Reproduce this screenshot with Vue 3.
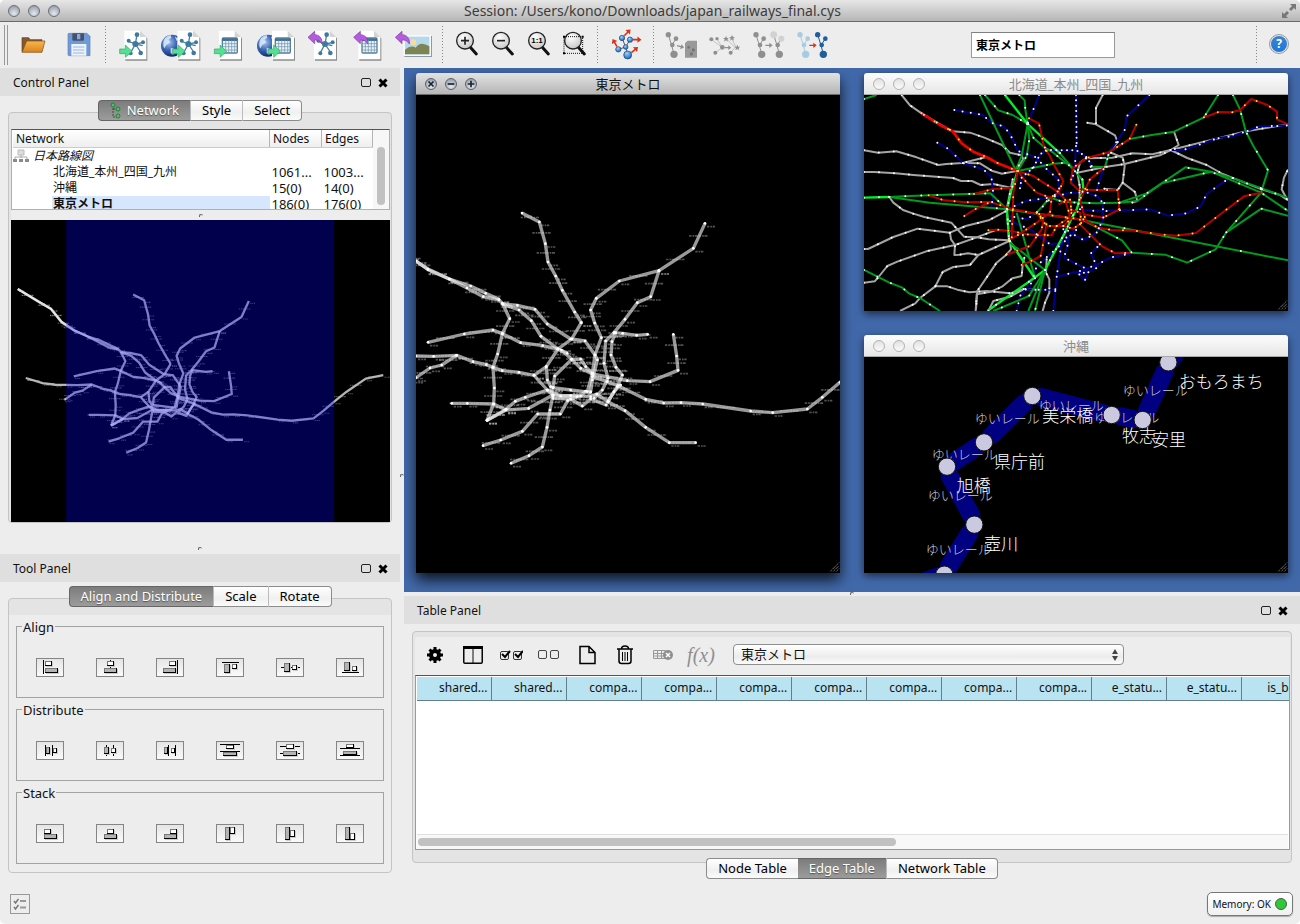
<script setup>
import { ref } from 'vue'

const search = ref('東京メトロ')
const currentNetwork = ref('東京メトロ')

const controlTabs = ['Network', 'Style', 'Select']
const toolTabs = ['Align and Distribute', 'Scale', 'Rotate']
const tableTabs = ['Node Table', 'Edge Table', 'Network Table']
const controlTab = ref('Network')
const toolTab = ref('Align and Distribute')
const tableTab = ref('Edge Table')

const networks = [
    { name: '北海道_本州_四国_九州', nodes: '1061...', edges: '1003...' },
    { name: '沖縄', nodes: '15(0)', edges: '14(0)' },
    { name: '東京メトロ', nodes: '186(0)', edges: '176(0)' }
]

const columns = [
    'shared...', 'shared...', 'compa...', 'compa...', 'compa...', 'compa...',
    'compa...', 'compa...', 'compa...', 'e_statu...', 'e_statu...', 'is_bull...'
]

// shapes: [kind, x, y, w, h], l = guide line, w = white box, g = gray box
const toolGroups = [
    {
        title: 'Align',
        tools: [
            { name: 'Align left', shapes: [['l',7,2,1,14],['w',9,3,7,5],['g',9,10,13,5]] },
            { name: 'Align center', shapes: [['l',14,2,1,14],['w',11,3,7,5],['g',8,10,13,5]] },
            { name: 'Align right', shapes: [['l',21,2,1,14],['w',13,3,7,5],['g',7,10,13,5]] },
            { name: 'Align top', shapes: [['l',6,4,17,1],['g',8,6,6,9],['w',16,6,5,5]] },
            { name: 'Align middle', shapes: [['l',5,9,19,1],['g',8,5,6,9],['w',16,7,5,5]] },
            { name: 'Align bottom', shapes: [['l',6,14,17,1],['g',8,4,6,9],['w',16,8,5,5]] }
        ]
    },
    {
        title: 'Distribute',
        tools: [
            { name: 'Distribute left', shapes: [['l',9,4,1,11],['g',10,6,4,7],['l',16,4,1,11],['w',17,7,4,5]] },
            { name: 'Distribute center', shapes: [['l',10,4,1,11],['g',8,6,5,7],['l',17,4,1,11],['w',15,7,5,5]] },
            { name: 'Distribute right', shapes: [['g',8,6,4,7],['l',12,4,1,11],['w',15,7,4,5],['l',19,4,1,11]] },
            { name: 'Distribute top', shapes: [['l',4,3,20,1],['w',10,4,8,4],['l',4,10,20,1],['g',7,11,14,4]] },
            { name: 'Distribute middle', shapes: [['l',4,5,20,1],['w',10,3,8,5],['l',4,12,20,1],['g',7,10,14,5]] },
            { name: 'Distribute bottom', shapes: [['w',10,3,8,4],['l',4,7,20,1],['g',7,10,14,4],['l',4,14,20,1]] }
        ]
    },
    {
        title: 'Stack',
        tools: [
            { name: 'Stack left', shapes: [['w',8,5,7,5],['g',8,10,13,5]] },
            { name: 'Stack center', shapes: [['w',11,5,7,5],['g',8,10,13,5]] },
            { name: 'Stack right', shapes: [['w',14,5,7,5],['g',8,10,13,5]] },
            { name: 'Stack top', shapes: [['g',9,3,5,13],['w',14,3,5,7]] },
            { name: 'Stack middle', shapes: [['g',9,3,5,13],['w',14,6,5,7]] },
            { name: 'Stack bottom', shapes: [['g',9,3,5,13],['w',14,9,5,7]] }
        ]
    }
]

// Tokyo subway, shared by the network window and the overview
const metroLines = [
    '-194,415 -96,475 -36,508 14,570 36,585 72,611 136,639 189,666 238,692 285,702 297,714 340,718 393,730 430,774 500,819',
    '-194,415 -96,473 -36,510 14,572 72,609 136,639 200,660 245,682 285,700',
    '297,714 345,732 382,764 411,811 462,849',
    '295,712 317,758 295,803 281,864 267,904 271,966 269,1014 249,1063',
    '72,829 181,804 267,792 295,803 350,830 416,839 462,849 490,862',
    '-156,837 -76,861 -16,869 36,870 89,871 158,868 207,887 247,896 267,904 295,914 345,919 390,928 430,972 447,987',
    '158,868 113,897 78,906 36,935 27,940',
    '143,1012 190,1012 269,1014 306,1032',
    '249,1063 306,1030 334,1006 364,994 430,972',
    '249,1063 306,1032 374,1027 447,987',
    '237,1139 290,1122 355,1096 401,1044 469,1044 491,1004 520,992',
    '321,1192 375,1169 415,1143 429,1084 438,1032 447,987 440,962 430,942 427,902 462,849 503,819 532,770',
    '354,441 406,468 424,533 432,588 455,630 475,673 512,738 532,770',
    '903,472 868,547 765,614 646,645 577,697 560,732 572,771 592,815 573,867 565,922 550,977',
    '765,614 740,692 700,710 663,760 630,800 605,825 600,892 612,937 595,972 570,997',
    '630,800 656,802 698,808 731,805',
    '808,805 818,870 822,913 738,947 670,944 565,924 530,907 503,880 472,852',
    '635,800 624,827 621,867 636,904 655,927 640,962 612,1007',
    '503,819 543,825 573,867 580,882 565,942 560,977',
    '447,965 500,972 560,979',
    '565,932 610,947 642,959 725,1000 779,1011 831,1010 896,1014 1040,1035 1106,1040 1210,1029 1255,994 1308,949 1367,902 1458,840 1541,823',
    '447,989 500,989 560,992 578,984 612,1007 663,1034 725,1084 796,1130 875,1130',
    '447,965 452,930 503,880 530,879 545,902 565,922',
    '447,997 500,999 535,1020 560,999 606,1017 630,977 650,957',
    '390,928 427,902',
    '430,972 470,990 530,990 545,975'
]

function toPoints(line){
    return line.split(' ').map(p=>{
        let xy = p.split(',')
        return { x: Number(xy[0]), y: Number(xy[1]) }
    })
}

const metroNodes = metroLines.flatMap(toPoints)

// captions under the stations and on the middle of the edges
const metroCaptions = []
metroLines.forEach(line=>{
    let ps = toPoints(line)
    for(let i=0;i<ps.length;i++){
        metroCaptions.push({ x: ps[i].x+6, y: ps[i].y+10, w: 24 })
        if(i>0){
            metroCaptions.push({ x: (ps[i].x+ps[i-1].x)/2-30, y: (ps[i].y+ps[i-1].y)/2, w: 56 })
        }
    }
})

// kind: gray / green / bright / blue / red, gap: distance of the station dots
const honshuLines = [
    { kind: 'gray', points: '155,87 180,118 215,142 270,175 308,196 360,200 403,215 456,237 480,260 515,268 520,280 497,312' },
    { kind: 'gray', points: '42,253 84,260 139,256 200,274 265,297 289,294 338,291 409,273' },
    { kind: 'gray', points: '338,291 390,292 425,314 456,323 500,315' },
    { kind: 'gray', points: '42,318 72,318 137,322 190,327 309,336 333,345 366,345 392,357 430,354 483,365' },
    { kind: 'gray', points: '118,393 130,410 159,432 190,443 223,453 304,470 342,512 380,514 416,520 476,523' },
    { kind: 'gray', points: '42,549 54,549 130,513 203,488 300,500 347,480 416,463 472,433' },
    { kind: 'gray', points: '300,500 303,520 315,537 313,567 328,566 354,562 385,567 360,597 310,603 278,618 256,661 210,696 196,712 150,735' },
    { kind: 'gray', points: '42,650 74,646 88,630 112,600 142,587 229,556 315,537 380,514 441,491' },
    { kind: 'gray', points: '256,661 292,661 322,671 358,679 410,675 480,682 522,669 575,672' },
    { kind: 'gray', points: '480,525 483,550 468,567 440,590 404,643 382,675 378,730' },
    { kind: 'gray', points: '478,525 385,567' },
    { kind: 'gray', points: '523,575 518,597 515,630 487,637 456,662 423,677 380,685 377,735' },
    { kind: 'gray', points: '415,735 430,705 480,692 522,669' },
    { kind: 'gray', points: '590,580 588,620 598,640 598,680 585,710 578,735' },
    { kind: 'gray', points: '758,87 738,125 738,175 795,208 803,228 778,258 818,275 824,300 818,350 803,372 760,368' },
    { kind: 'gray', points: '712,170 738,175' },
    { kind: 'gray', points: '708,277 787,275 846,262 907,265 962,252 1120,213 1188,196 1314,175' },
    { kind: 'gray', points: '962,252 986,237 972,197' },
    { kind: 'gray', points: '682,320 765,303 820,295 930,268 962,252 1012,276 1070,297 1118,324 1235,370 1290,387 1312,402 1295,370 1302,335 1314,310' },
    { kind: 'gray', points: '708,277 690,290 682,320 690,365 688,405' },
    { kind: 'gray', points: '818,350 855,378 862,405 845,410' },
    { kind: 'gray', points: '488,340 470,430 478,525' },
    { kind: 'blue', gap: 25, points: '313,132 395,146 430,173 458,180 478,200 504,255 560,275 585,305 625,340 628,375 605,395 560,440 530,460 478,450' },
    { kind: 'blue', gap: 34, points: '262,230 297,250 338,291 400,310 424,332 430,383 424,425 471,430' },
    { kind: 'blue', gap: 16, points: '678,87 680,240' },
    { kind: 'blue', points: '678,240 675,300 665,350' },
    { kind: 'blue', gap: 16, points: '510,367 515,335 550,305 570,265 590,252 680,253 712,275 725,300' },
    { kind: 'blue', points: '567,87 558,110 533,174' },
    { kind: 'blue', points: '898,87 829,152 825,190 778,258 740,370' },
    { kind: 'blue', points: '962,252 1000,252 1060,232 1100,217 1150,210 1228,181 1314,178' },
    { kind: 'blue', gap: 40, points: '690,430 750,436 810,433 900,430 953,449 1008,442 1052,421 1070,384 1135,338' },
    { kind: 'blue', gap: 25, points: '471,430 530,404 600,395 660,380 712,380 740,390 758,410 760,460 740,500 700,522 660,500 640,480' },
    { kind: 'blue', gap: 60, points: '610,735 620,632 635,530 650,480' },
    { kind: 'blue', gap: 36, points: '620,632 690,615 745,594 780,575 845,562' },
    { kind: 'blue', gap: 26, points: '640,490 655,530 642,575 702,605 710,620 683,620 705,643 712,620 742,605 723,562 755,530' },
    { kind: 'blue', gap: 24, points: '500,735 510,690 545,650 560,600 640,530 680,490' },
    { kind: 'blue', gap: 30, points: '616,670 575,672 520,669' },
    { kind: 'blue', points: '480,465 540,490 600,535 635,530' },
    { kind: 'green', points: '42,99 80,87' },
    { kind: 'green', gap: 300, points: '390,87 497,312' },
    { kind: 'green', points: '405,87 445,133 488,147 533,174' },
    { kind: 'green', points: '508,87 524,103 526,130 533,174' },
    { kind: 'green', gap: 150, points: '533,174 515,270 497,312' },
    { kind: 'green', gap: 52, points: '533,174 538,220 530,270 503,315' },
    { kind: 'bright', gap: 110, points: '465,87 533,174' },
    { kind: 'bright', gap: 130, points: '533,174 630,262' },
    { kind: 'green', gap: 70, points: '630,262 668,307 700,345' },
    { kind: 'green', points: '533,174 550,215 585,245 610,260 668,307' },
    { kind: 'bright', points: '42,395 118,393' },
    { kind: 'green', gap: 48, points: '118,393 178,390 240,388 325,385 421,382 471,430' },
    { kind: 'green', gap: 356, points: '118,393 240,410 471,430 560,443 665,456 1314,583' },
    { kind: 'bright', gap: 50, points: '503,315 485,370 471,430 477,523' },
    { kind: 'green', gap: 135, points: '480,525 555,637 500,440' },
    { kind: 'green', points: '503,315 610,293 650,290 668,307' },
    { kind: 'green', gap: 68, points: '1104,87 1062,154 972,197 905,207 839,219 778,258 765,303 720,302' },
    { kind: 'green', gap: 62, points: '1149,87 1170,130 1187,195 1210,240 1254,313 1233,380 1129,499 1097,550 1011,590 945,566 845,560 816,523 700,463' },
    { kind: 'green', gap: 80, points: '808,410 862,405 935,352 1006,304 1083,317 1233,380 1314,435' },
    { kind: 'green', gap: 90, points: '808,410 890,382 935,352 1083,317 1160,340 1312,395' },
    { kind: 'green', gap: 128, points: '1129,499 1234,428 1314,449' },
    { kind: 'green', points: '808,410 740,412 640,408 600,395 560,440' },
    { kind: 'green', points: '42,612 118,650 157,665 178,683 210,696 270,735' },
    { kind: 'bright', gap: 38, points: '697,340 700,370 680,430 665,456 645,500 615,555 585,612' },
    { kind: 'bright', gap: 140, points: '477,523 555,637' },
    { kind: 'bright', gap: 60, points: '585,612 540,645 412,735' },
    { kind: 'green', gap: 140, points: '585,612 480,530' },
    { kind: 'green', gap: 90, points: '585,612 537,690 430,735' },
    { kind: 'green', gap: 140, points: '585,612 535,735' },
    { kind: 'green', gap: 120, points: '585,612 555,735' },
    { kind: 'bright-red', gap: 46, points: '215,142 270,177 308,196 335,232 370,257 409,273 440,290 503,315' },
    { kind: 'red', gap: 40, points: '537,157 567,173 583,245 600,270 610,293 640,345 625,380 600,395' },
    { kind: 'red', gap: 46, points: '859,176 839,219 778,258 708,277 668,307 662,350 695,380' },
    { kind: 'red', gap: 44, points: '1062,154 1106,138 1145,139 1170,132 1204,99 1252,117 1281,137 1281,160 1314,175' },
    { kind: 'red', gap: 42, points: '372,384 425,370 483,365' },
    { kind: 'red', gap: 40, points: '236,388 283,403 345,409 421,408' },
    { kind: 'red', gap: 40, points: '343,450 373,431 421,408 490,430 560,443 665,456' },
    { kind: 'red', gap: 30, points: '415,493 441,491 485,495 530,505 570,508 605,508 620,480' },
    { kind: 'red', gap: 34, points: '503,315 550,330 580,350 625,378 645,400 660,450' },
    { kind: 'red', gap: 38, points: '503,315 530,350 560,380 600,395' },
    { kind: 'red', gap: 40, points: '503,315 490,380 487,465 485,520' },
    { kind: 'red', gap: 30, points: '478,522 510,503 560,470 600,440 605,395' },
    { kind: 'red', gap: 36, points: '468,567 500,555 540,540 575,490 580,460 560,440' },
    { kind: 'red', gap: 32, points: '515,597 548,583 572,570 580,530 590,470' },
    { kind: 'red', gap: 20, points: '560,440 590,480 640,480 670,488 695,470 690,440 660,430' },
    { kind: 'red', gap: 20, points: '620,480 650,460 665,440 660,400 625,415' },
    { kind: 'red', gap: 30, points: '765,303 720,340 690,400 700,440 710,470' },
    { kind: 'red', gap: 30, points: '808,430 803,372 730,372 690,370' },
    { kind: 'red', gap: 44, points: '808,430 760,455 700,445' },
    { kind: 'red', gap: 42, points: '700,460 745,485 785,492 855,494 940,506 978,509 1038,501 1100,453 1182,391 1233,380' },
    { kind: 'red', gap: 42, points: '690,475 720,505 755,540 796,562 845,560' },
    { kind: 'red', gap: 20, points: '640,480 665,456 700,463' }
]

const okinawaNodes = [
    { x: 955, y: 109 }, { x: 547, y: 210 }, { x: 785, y: 267 }, { x: 878, y: 282 },
    { x: 402, y: 349 }, { x: 291, y: 422 }, { x: 373, y: 596 }, { x: 283, y: 746 }
]
const okinawaLabels = [
    { text: 'おもろまち', x: 986, y: 186 },
    { text: '美栄橋', x: 577, y: 287 },
    { text: '牧志', x: 816, y: 347 },
    { text: '安里', x: 906, y: 361 },
    { text: '県庁前', x: 432, y: 427 },
    { text: '旭橋', x: 320, y: 499 },
    { text: '壺川', x: 402, y: 673 }
]
const okinawaEdges = [[818,208],[566,253],[733,289],[374,292],[245,399],[233,523],[227,685]]
</script>

<template>
    <div class="app">
        <!-- shared drawings of the toolbar icons -->
        <svg class="defs" aria-hidden="true">
            <defs>
                <linearGradient id="orange" x1="0" y1="0" x2="0" y2="1"><stop offset="0" stop-color="#f9b64e"/><stop offset="1" stop-color="#d9831c"/></linearGradient>
                <radialGradient id="sea" cx=".35" cy=".35" r=".7"><stop offset="0" stop-color="#a9c8ee"/><stop offset=".5" stop-color="#3a66b4"/><stop offset="1" stop-color="#0c2360"/></radialGradient>
                <radialGradient id="glass" cx=".4" cy=".3" r=".7"><stop offset="0" stop-color="#fff"/><stop offset="1" stop-color="#c9c9c9"/></radialGradient>
                <radialGradient id="ball" cx=".4" cy=".3" r=".7"><stop offset="0" stop-color="#9ed0ff"/><stop offset="1" stop-color="#1767b4"/></radialGradient>
                <g id="page">
                    <path d="M376,93h46l20,19v67h-66z" fill="#8c8c8c"/>
                    <path d="M373,89h47l19,19v67h-66z" fill="#fff"/>
                    <path d="M420,89l19,19h-19z" fill="#d4d4d4"/>
                </g>
                <g id="net">
                    <path d="M406,129L411,101M406,129L432,124M406,129L424,156M406,129L391,157M406,129L386,121M406,129L428,134" stroke="#44809f" stroke-width="4"/>
                    <g fill="#3f7a9e"><circle cx="406" cy="129" r="9"/><circle cx="411" cy="101" r="7"/><circle cx="429" cy="124" r="6"/><circle cx="422" cy="156" r="7"/><circle cx="392" cy="157" r="6"/><circle cx="386" cy="119" r="6"/></g>
                </g>
                <g id="grid">
                    <rect x="383" y="111" width="45" height="45" rx="3" fill="#e9f1f6" stroke="#54819d" stroke-width="4"/>
                    <path d="M383,116h45" stroke="#416f8d" stroke-width="8"/>
                    <path d="M383,128h45M383,137h45M383,147h45M393,116v40M402,116v40M411,116v40M420,116v40" stroke="#6a93ab" stroke-width="2"/>
                </g>
                <path id="in" d="M359,144h17v-12l20,19l-20,18v-11h-17z" fill="#52e091" stroke="#38a566" stroke-width="2"/>
                <path id="out" d="M924,109L944,91V101C958,101 968,112 966,129C960,119 954,117 944,117V128Z" fill="#b45be0" stroke="#7d3aa5" stroke-width="2"/>
                <g id="globe">
                    <circle cx="516" cy="134" r="33" fill="url(#sea)"/>
                    <path d="M492,116q8,-12 20,-14l2,8l-8,6l5,8l-12,8l-6,10q-6,-10 -1,-26M512,140l12,4l-4,18l-8,-6zM524,106l12,8l-6,6z" fill="#dcebfb" opacity=".85"/>
                </g>
                <g id="lens">
                    <path d="M121,139l18,20" stroke="#111" stroke-width="9" stroke-linecap="round"/>
                    <circle cx="105" cy="119" r="25" fill="url(#glass)" stroke="#222" stroke-width="4"/>
                </g>
                <g id="balls">
                    <path d="M715,101L725,133L738,113M725,133L732,160" stroke="currentColor" stroke-width="3" fill="none"/>
                    <g fill="currentColor"><circle cx="715" cy="101" r="8"/><circle cx="738" cy="113" r="7"/><circle cx="727" cy="132" r="7"/><circle cx="732" cy="160" r="11"/></g>
                </g>
                <path id="pointer" d="M0,-2h12v-6l10,8l-10,8v-6h-12z" fill="currentColor"/>
            </defs>
        </svg>

        <header class="titlebar">
            <div class="lights"><i></i><i></i><i></i></div>
            <h1>Session: /Users/kono/Downloads/japan_railways_final.cys</h1>
            <button class="expand" aria-label="Full screen">
                <svg width="16" height="16" viewBox="0 0 16 16"><path d="M9,1h6v6l-2,-2l-3,3l-2,-2l3,-3zM1,15h6l-2,-2l3,-3l-2,-2l-3,3l-2,-2z" fill="#777"/></svg>
            </button>
        </header>

        <div class="toolbar">
            <div class="grip"></div>
            <div class="files">
                <button aria-label="Open session">
                    <svg viewBox="30 66 135 132"><path d="M66,152V110h20l5,6h35v8z" fill="#865a2c" stroke="#5c3c1d" stroke-width="2"/><path d="M80,120h55l-9,34H66z" fill="url(#orange)" stroke="#7a4b17" stroke-width="2"/></svg>
                </button>
                <button aria-label="Save session">
                    <svg viewBox="165 66 135 132"><path d="M207,97h54l9,9v58h-63q-3,0 -3,-4v-60q0,-3 3,-3z" fill="#6f9ad6" stroke="#5a83bf" stroke-width="2"/><path d="M217,97h35v19q0,3 -4,3h-27q-4,0 -4,-3z" fill="#42526e"/><path d="M231,99h10v16h-10z" fill="#8aa6d2"/><path d="M214,129h45v35h-45z" fill="#eef3fb"/><path d="M219,138h34M219,147h34M219,156h34" stroke="#9db6dc" stroke-width="3"/></svg>
                </button>
            </div>
            <div class="sep"></div>
            <div class="imports">
                <button aria-label="Import network from file"><svg viewBox="333 66 141 132"><use href="#page"/><use href="#net"/><use href="#in"/></svg></button>
                <button aria-label="Import network from database"><svg viewBox="474 66 141 132"><use href="#globe"/><use href="#page" x="159"/><use href="#net" x="159"/><use href="#in" x="159"/></svg></button>
                <button aria-label="Import table from file"><svg viewBox="615 66 141 132"><use href="#page" x="284"/><use href="#grid" x="284"/><use href="#in" x="284"/></svg></button>
                <button aria-label="Import table from database"><svg viewBox="756 66 141 132"><use href="#globe" x="288"/><use href="#page" x="443"/><use href="#grid" x="443"/><use href="#in" x="445"/></svg></button>
            </div>
            <div class="exports">
                <button aria-label="Export network"><svg viewBox="897 66 138 132"><use href="#page" x="569"/><use href="#net" x="569"/><use href="#out"/></svg></button>
                <button aria-label="Export table"><svg viewBox="1035 66 138 132"><use href="#page" x="702"/><use href="#grid" x="703"/><use href="#out" x="137"/></svg></button>
                <button aria-label="Export image">
                    <svg viewBox="1173 66 138 132"><path d="M1213,105h83v63h-83z" fill="#8d9aa3"/><path d="M1210,102h83v63h-83z" fill="#f5f9fc"/><path d="M1215,107h73v53h-73z" fill="#b5d8ea"/><path d="M1215,160v-14q18,-16 32,-6q14,-22 41,-4v24z" fill="#7c8454"/><circle cx="1240" cy="124" r="9" fill="#f8dc9c"/><use href="#out" x="262"/></svg>
                </button>
            </div>
            <div class="sep"></div>
            <div class="zooms">
                <button aria-label="Zoom in"><svg viewBox="54 66 108 132"><use href="#lens"/><path d="M93,119h24M105,107v24" stroke="#222" stroke-width="5"/></svg></button>
                <button aria-label="Zoom out"><svg viewBox="162 66 108 132"><use href="#lens" x="108"/><path d="M201,119h24" stroke="#222" stroke-width="5"/></svg></button>
                <button aria-label="Zoom to actual size"><svg viewBox="270 66 108 132"><use href="#lens" x="216"/><text x="321" y="127" class="ratio">1:1</text></svg></button>
                <button aria-label="Fit content"><svg viewBox="378 66 108 132"><use href="#lens" x="324"/><rect x="402" y="107" width="56" height="50" fill="none" stroke="#111" stroke-width="3" stroke-dasharray="3 3"/><path d="M399,104h6v6h-6zM455,104h6v6h-6zM399,154h6v6h-6z"/></svg></button>
            </div>
            <div class="sep"></div>
            <div class="layout">
                <button aria-label="Apply preferred layout">
                    <svg viewBox="519 66 135 132">
                        <path d="M576,111L587,138L600,116M565,145L587,138L593,160" stroke="#555" stroke-width="3" fill="none"/>
                        <g fill="url(#ball)" stroke="#174a7c" stroke-width="2"><circle cx="576" cy="111" r="8"/><circle cx="600" cy="116" r="8"/><circle cx="565" cy="145" r="8"/><circle cx="587" cy="138" r="7"/><circle cx="593" cy="162" r="12"/></g>
                        <g color="#d9331e"><use href="#pointer" transform="translate(583,104) rotate(-45) scale(1.2)"/><use href="#pointer" transform="translate(608,116) scale(1.2)"/><use href="#pointer" transform="translate(561,137) rotate(-120) scale(1.2)"/><use href="#pointer" transform="translate(604,155) rotate(-40) scale(1.2)"/></g>
                    </svg>
                </button>
            </div>
            <div class="sep"></div>
            <div class="edits">
                <button aria-label="New network from selection"><svg viewBox="687 66 132 132" color="#8f8f8f"><use href="#balls"/><use href="#pointer" transform="translate(741,134) rotate(15)"/><path d="M765,127l8,-8h28v51h-36z" fill="#999"/><g fill="#777"><circle cx="776" cy="139" r="4"/><circle cx="790" cy="147" r="5"/><circle cx="784" cy="159" r="5"/></g></svg></button>
                <button aria-label="First neighbors"><svg viewBox="819 66 132 132" color="#8f8f8f"><path d="M844,115L877,140L860,112M877,140L856,155M915,140L888,112M915,140L902,155M918,140L905,112" stroke="#aaa" stroke-width="2" fill="none"/><use href="#pointer" transform="translate(884,140) scale(.9)"/><g fill="#8f8f8f"><circle cx="844" cy="115" r="6"/><circle cx="861" cy="113" r="5"/><circle cx="877" cy="139" r="7"/><circle cx="856" cy="155" r="6"/><circle cx="902" cy="155" r="6"/><path d="M888,105l3,6h6l-5,4l2,7l-6,-4l-6,4l2,-7l-5,-4h6zM906,102l3,6h6l-5,4l2,7l-6,-4l-6,4l2,-7l-5,-4h6zM922,131l3,6h6l-5,4l2,7l-6,-4l-6,4l2,-7l-5,-4h6z"/></g></svg></button>
                <button aria-label="Hide selected"><svg viewBox="951 66 132 132" color="#8f8f8f"><use href="#balls" x="263"/><use href="#pointer" transform="translate(1006,133)"/><use href="#balls" x="316"/><circle cx="1031" cy="101" r="10" fill="#d2d2d2"/><circle cx="1054" cy="113" r="9" fill="#d2d2d2"/></svg></button>
                <button aria-label="Show all"><svg viewBox="1083 66 132 132"><use href="#balls" x="395" color="#a9cbe2"/><use href="#pointer" transform="translate(1138,133)" color="#d9331e"/><use href="#balls" x="448" color="#1f5d9c"/></svg></button>
            </div>
            <input v-model="search" class="search" type="text" aria-label="Search"/>
            <div class="sep"></div>
            <button class="help" aria-label="Help">?</button>
        </div>

        <main class="body">
            <aside class="left">
                <section class="panel grow">
                    <div class="panel-head">
                        <h2>Control Panel</h2>
                        <button class="float-btn" aria-label="Float control panel"></button>
                        <button class="close-btn" aria-label="Close control panel"><svg width="10" height="10" viewBox="0 0 10 10"><path d="M1.500,1.500l7,7M8.500,1.500l-7,7" stroke="#000" stroke-width="3"/></svg></button>
                    </div>
                    <div class="tabs">
                        <button v-for="tab in controlTabs" :class="{ on: controlTab==tab }" @click="controlTab=tab">
                            <svg v-if="tab=='Network'" width="13" height="17" viewBox="0 0 13 17"><path d="M3,3v12h5M3,7h5" fill="none" stroke="#35533b" stroke-dasharray="2 1"/><g fill="#4fc363" stroke="#2a7a3a"><circle cx="3" cy="3" r="2"/><circle cx="8" cy="7" r="2"/><circle cx="8" cy="14" r="2"/></g></svg>
                            {{ tab }}
                        </button>
                    </div>
                    <div class="frame network-frame">
                        <div class="tree">
                            <table>
                                <colgroup>
                                    <col class="c-name"/>
                                    <col class="c-nodes"/>
                                    <col class="c-edges"/>
                                </colgroup>
                                <thead>
                                    <tr><th>Network</th><th>Nodes</th><th>Edges</th></tr>
                                </thead>
                                <tbody>
                                    <tr>
                                        <td colspan="3" class="root">
                                            <svg width="16" height="14" viewBox="0 0 16 14"><path d="M8,4v5M2,11V8h12v3" fill="none" stroke="#aaa"/><path d="M5,1h6v5h-6z" fill="#ddd" stroke="#bbb"/><path d="M0,10h4v3h-4zM6,10h4v3h-4zM12,10h4v3h-4z" fill="#8a8a8a"/></svg>
                                            <em>日本路線図</em>
                                        </td>
                                    </tr>
                                    <tr v-for="n in networks" :class="{ selected: n.name==currentNetwork }">
                                        <td class="name">{{ n.name }}</td>
                                        <td class="count">{{ n.nodes }}</td>
                                        <td class="count">{{ n.edges }}</td>
                                    </tr>
                                </tbody>
                            </table>
                            <div class="vscroll"><i></i></div>
                        </div>
                        <div class="split"><i></i></div>
                        <svg class="overview metro" viewBox="-226 87 1799 1434" preserveAspectRatio="xMidYMid slice">
                            <polyline v-for="line in metroLines" :points="line"/>
                            <path v-for="c in metroCaptions" class="caption" :d="`M${c.x},${c.y}h${c.w}`"/>
                            <rect x="36" y="80" width="1272" height="1450" fill="#00f" opacity=".3"/>
                        </svg>
                    </div>
                    <div class="split bottom"><i></i></div>
                </section>

                <section class="panel">
                    <div class="panel-head">
                        <h2>Tool Panel</h2>
                        <button class="float-btn" aria-label="Float tool panel"></button>
                        <button class="close-btn" aria-label="Close tool panel"><svg width="10" height="10" viewBox="0 0 10 10"><path d="M1.500,1.500l7,7M8.500,1.500l-7,7" stroke="#000" stroke-width="3"/></svg></button>
                    </div>
                    <div class="tabs">
                        <button v-for="tab in toolTabs" :class="{ on: toolTab==tab }" @click="toolTab=tab">{{ tab }}</button>
                    </div>
                    <div class="frame tool-frame">
                        <fieldset v-for="group in toolGroups">
                            <legend>{{ group.title }}</legend>
                            <div class="tools">
                                <button v-for="tool in group.tools" :aria-label="tool.name">
                                    <svg width="28" height="19" viewBox="0 0 28 19" shape-rendering="crispEdges">
                                        <template v-for="s in tool.shapes">
                                            <rect v-if="s[0]=='l'" :x="s[1]" :y="s[2]" :width="s[3]" :height="s[4]"/>
                                            <g v-else>
                                                <rect :x="s[1]+1" :y="s[2]+1" :width="s[3]" :height="s[4]" fill="#ccc"/>
                                                <rect :x="s[1]" :y="s[2]" :width="s[3]" :height="s[4]"/>
                                                <rect :x="s[1]" :y="s[2]" :width="s[3]-1" :height="s[4]-1" fill="#777"/>
                                                <rect :x="s[1]+1" :y="s[2]+1" :width="s[3]-2" :height="s[4]-2" :fill="s[0]=='w' ? '#fff' : '#b4b4b4'"/>
                                            </g>
                                        </template>
                                    </svg>
                                </button>
                            </div>
                        </fieldset>
                    </div>
                </section>
            </aside>

            <div class="vsplit"><i></i></div>

            <div class="right">
                <div class="desktop">
                    <section class="win active tokyo">
                        <div class="win-title">
                            <div class="lights">
                                <i><svg viewBox="0 0 12 12"><path d="M3,3l6,6M9,3l-6,6"/></svg></i>
                                <i><svg viewBox="0 0 12 12"><path d="M2,6h8"/></svg></i>
                                <i><svg viewBox="0 0 12 12"><path d="M2,6h8M6,2v8"/></svg></i>
                            </div>
                            <h3>東京メトロ</h3>
                        </div>
                        <svg class="metro" viewBox="36 87 1272 1434">
                            <polyline v-for="line in metroLines" :points="line"/>
                            <path v-for="c in metroCaptions" class="caption" :d="`M${c.x},${c.y}h${c.w}`"/>
                            <circle v-for="n in metroNodes" :cx="n.x" :cy="n.y" r="4"/>
                            <path class="resize" d="M1279,1516l26,-26M1288,1516l17,-17M1297,1516l8,-8"/>
                        </svg>
                    </section>
                    <section class="win honshu">
                        <div class="win-title">
                            <div class="lights"><i></i><i></i><i></i></div>
                            <h3>北海道_本州_四国_九州</h3>
                        </div>
                        <svg class="rail" viewBox="42 87 1272 648">
                            <polyline v-for="l in honshuLines" :class="l.kind" :points="l.points"/>
                            <polyline v-for="l in honshuLines" class="dots" :class="l.kind" :points="l.points" :stroke-dasharray="`0 ${l.gap || 45}`"/>
                            <path class="resize" d="M1285,730l26,-26M1294,730l17,-17M1303,730l8,-8"/>
                        </svg>
                    </section>
                    <section class="win okinawa">
                        <div class="win-title">
                            <div class="lights"><i></i><i></i><i></i></div>
                            <h3>沖縄</h3>
                        </div>
                        <svg class="yui" viewBox="42 93 1272 648">
                            <path class="track" d="M985,70L965,100M944,137L890,257M851,280L812,271M758,261L573,213M524,230L424,328M380,362L316,405M299,450L364,568M358,622L296,722M262,752L200,775"/>
                            <text v-for="e in okinawaEdges" class="edge" :x="e[0]" :y="e[1]">ゆいレール</text>
                            <circle v-for="n in okinawaNodes" :cx="n.x" :cy="n.y" r="26"/>
                            <text v-for="l in okinawaLabels" class="station" :x="l.x" :y="l.y">{{ l.text }}</text>
                            <path class="resize" d="M1285,736l26,-26M1294,736l17,-17M1303,736l8,-8"/>
                        </svg>
                    </section>
                </div>
                <div class="hsplit"><i></i></div>
                <section class="panel">
                    <div class="panel-head">
                        <h2>Table Panel</h2>
                        <button class="float-btn" aria-label="Float table panel"></button>
                        <button class="close-btn" aria-label="Close table panel"><svg width="10" height="10" viewBox="0 0 10 10"><path d="M1.500,1.500l7,7M8.500,1.500l-7,7" stroke="#000" stroke-width="3"/></svg></button>
                    </div>
                    <div class="frame table-frame">
                        <div class="table-tools">
                            <button aria-label="Settings"><svg width="16" height="16" viewBox="0 0 16 16"><circle cx="8" cy="8" r="4" fill="none" stroke="#000" stroke-width="4"/><path d="M8,0v4M8,12v4M0,8h4M12,8h4M2.500,2.500l3,3M10.500,10.500l3,3M13.500,2.500l-3,3M5.500,10.500l-3,3" stroke="#000" stroke-width="3"/></svg></button>
                            <button aria-label="Show columns"><svg width="22" height="20" viewBox="0 0 22 20"><rect x="1.500" y="1.500" width="19" height="17" rx="1" fill="none" stroke="#111"/><path d="M11,2v16" stroke="#111"/><path d="M1,2.500h20" stroke="#000" stroke-width="3"/><path d="M2,2v16M20,2v16M2,18h18" stroke="#000"/></svg></button>
                            <button aria-label="Select all columns"><svg width="24" height="12" viewBox="0 0 24 12"><g fill="none" stroke="#333"><rect x="1.500" y="2.500" width="8" height="8" rx="1.500"/><rect x="14.500" y="2.500" width="8" height="8" rx="1.500"/></g><path d="M3,5l3,3l5,-6M16,5l3,3l5,-6" fill="none" stroke="#000" stroke-width="2"/></svg></button>
                            <button aria-label="Hide all columns"><svg width="22" height="12" viewBox="0 0 22 12" fill="none" stroke="#444"><rect x=".5" y="1.500" width="8" height="8" rx="1.500"/><rect x="12.500" y="1.500" width="8" height="8" rx="1.500"/></svg></button>
                            <button aria-label="New column"><svg width="17" height="20" viewBox="0 0 17 20" fill="none" stroke="#000" stroke-width="1.500"><path d="M1,1.500h9l6,6v11h-15zM10,1.500v6h6"/></svg></button>
                            <button aria-label="Delete columns"><svg width="18" height="20" viewBox="0 0 18 20" fill="none" stroke="#000" stroke-width="1.500"><path d="M1,4h16M5.500,4q0,-3 3.500,-3t3.500,3M3,4v12q0,2.500 2.500,2.500h7q2.500,0 2.500,-2.500v-12"/><path d="M6.500,7v9M9,7v9M11.500,7v9" stroke-width="1"/></svg></button>
                            <button aria-label="Delete table"><svg width="20" height="12" viewBox="0 0 20 12"><path d="M.5,1.500h12v8h-12zM.5,4.500h12M.5,7h12M4.500,1.500v8M8.500,1.500v8" fill="none" stroke="#999"/><circle cx="15" cy="6" r="5" fill="#8f8f8f"/><path d="M13,4l4,4M17,4l-4,4" stroke="#fff" stroke-width="1.500"/></svg></button>
                            <button class="fx">f(x)</button>
                            <div class="combo">
                                <select v-model="currentNetwork" aria-label="Network table">
                                    <option v-for="n in networks">{{ n.name }}</option>
                                </select>
                                <svg width="6" height="12" viewBox="0 0 6 12"><path d="M3,0l3,5h-6zM3,12l3,-5h-6z" fill="#444"/></svg>
                            </div>
                        </div>
                        <div class="grid">
                            <table>
                                <thead>
                                    <tr><th v-for="c in columns">{{ c }}</th></tr>
                                </thead>
                            </table>
                            <div class="hscroll"><i></i></div>
                        </div>
                    </div>
                    <div class="tabs below">
                        <button v-for="tab in tableTabs" :class="{ on: tableTab==tab }" @click="tableTab=tab">{{ tab }}</button>
                    </div>
                </section>
            </div>
        </main>

        <footer class="status">
            <button class="tasks" aria-label="Task history"><svg width="14" height="12" viewBox="0 0 14 12"><path d="M1,3l1.500,2l3,-4M1,9l1.500,2l3,-4" fill="none" stroke="#777" stroke-width="1.500"/><path d="M7,3h6M7,9.500h6" stroke="#999" stroke-width="2"/></svg></button>
            <button class="memory">Memory: OK <i></i></button>
        </footer>
    </div>
</template>

<style>
body {
    margin: 0;
    background: #fff;
}
</style>

<style scoped>
.app {
    display: flex;
    flex-direction: column;
    min-height: 100vh;
    overflow: hidden;
    border-radius: 5px;
    background: #ededed;
    color: #111;
    font: 12px/16px "Noto Sans", "Noto Sans CJK JP", sans-serif;
    cursor: default;
}
* {
    box-sizing: border-box;
}
button, input, select {
    padding: 0;
    border: 0;
    background: none;
    color: inherit;
    font: inherit;
}
h1, h2, h3 {
    margin: 0;
    font-weight: normal;
}
svg {
    display: block;
}
.defs {
    position: absolute;
    width: 0;
    height: 0;
}

/* title bar */
.titlebar {
    display: grid;
    grid-template-columns: 1fr auto 1fr;
    align-items: center;
    height: 22px;
    padding: 0 3px 0 8px;
    border-bottom: 1px solid #6b6b6b;
    background: linear-gradient(#e6e6e6, #b6b6b6);
}
.titlebar h1 {
    color: #3c3c3c;
    font-size: 14px;
}
.expand {
    justify-self: end;
}
.lights {
    display: flex;
    gap: 8px;
}
.lights i {
    width: 12px;
    height: 12px;
    border: 1px solid #6a6f78;
    border-radius: 50%;
    background: radial-gradient(circle at 50% 75%, #e3e8f0, #8b929e);
}

/* main toolbar */
.toolbar {
    display: flex;
    height: 46px;
    padding-left: 4px;
}
.toolbar > div:not(.sep):not(.grip) {
    display: flex;
}
.toolbar svg {
    width: 100%;
    height: 44px;
}
.grip {
    width: 4px;
    height: 40px;
    margin: 3px 2px 0 0;
    border: solid #999;
    border-width: 0 1px;
}
.files button { width: 45px; }
.imports button { width: 47px; }
.exports button { width: 46px; }
.zooms button { width: 36px; }
.layout button { width: 45px; }
.edits button { width: 44px; }
.sep {
    width: 1px;
    height: 38px;
    margin: 4px 5px;
    background: repeating-linear-gradient(#888 0 1px, #ededed 1px 3px);
}
.ratio {
    font: bold 24px "Liberation Sans", sans-serif;
    text-anchor: middle;
}
.search {
    width: 144px;
    height: 26px;
    margin: 10px 136px 0 auto;
    padding: 0 4px 1px;
    border: 1px solid #9a9a9a;
    border-top-color: #808080;
    background: #fff;
    color: #000;
    font-weight: bold;
}
.help {
    width: 20px;
    height: 20px;
    margin: 12px 11px 0 7px;
    border: 2px solid #e4e4e4;
    border-radius: 50%;
    outline: 1px solid #9b9b9b;
    outline-offset: -1px;
    background: linear-gradient(#3d83cf, #1c78dd);
    color: #fff;
    font-weight: bold;
    line-height: 16px;
}

/* page body */
.body {
    display: flex;
    flex: 1;
}
.left {
    display: flex;
    flex-direction: column;
    flex: 0 0 400px;
    padding-bottom: 10px;
}
.right {
    display: flex;
    flex-direction: column;
    flex: 1;
    min-width: 0;
    padding-bottom: 4px;
}
.grow {
    display: flex;
    flex-direction: column;
    flex: 1;
}
.panel-head {
    display: flex;
    align-items: center;
    gap: 7px;
    height: 28px;
    padding: 1px 12px 0 13px;
    background: #dfdfdf;
}
.panel-head h2 {
    flex: 1;
    font-size: 12px;
    line-height: 17px;
}
.float-btn {
    width: 10px;
    height: 9px;
    border: 1px solid #222;
    border-radius: 2px;
}
.close-btn {
    width: 10px;
    height: 10px;
}

.tabs {
    display: flex;
    justify-content: center;
    position: relative;
    z-index: 1;
    margin-top: 4px;
}
.tabs button {
    display: flex;
    align-items: center;
    gap: 4px;
    height: 21px;
    padding: 0 11px 1px;
    border: solid #8c8c8c;
    border-width: 1px 0;
    background: linear-gradient(#fff, #f0f0f0 60%, #fbfbfb);
    color: #000;
    font-size: 13px;
}
.tabs button + button:not(.on) {
    border-left: 1px solid #bbb;
}
.tabs button:first-child {
    border-left-width: 1px;
    border-radius: 4px 0 0 4px;
}
.tabs button:last-child {
    border-right-width: 1px;
    border-right-color: #8c8c8c;
    border-radius: 0 4px 4px 0;
}
.tabs button.on {
    border-color: #666;
    background: linear-gradient(#7c7c7c, #9c9c9c);
    color: #fff;
    text-shadow: 0 1px 1px #555;
}
.frame {
    margin: 0 8px;
    border: 1px solid #c4c4c4;
    border-radius: 4px;
    background: #e4e4e4;
}
.network-frame {
    display: flex;
    flex-direction: column;
    flex: 1;
    margin-top: -9px;
    padding: 16px 1px 0 2px;
}
.tree {
    display: flex;
    height: 81px;
    overflow: hidden;
    border: 1px solid #b0b0b0;
    border-top-color: #555;
    background: #fff;
}
table {
    border-collapse: collapse;
    table-layout: fixed;
}
.tree table {
    flex: 1;
    width: 0;
    margin-left: 1px;
}
.c-nodes { width: 52px; }
.c-edges { width: 51px; }
.tree th {
    height: 17px;
    padding: 0 3px;
    border-right: 1px solid #b5b5b5;
    border-bottom: 1px solid #ccc;
    background: linear-gradient(#fff, #eee);
    font-weight: normal;
    line-height: 15px;
    text-align: left;
}
.tree td {
    height: 16px;
    padding: 0;
    line-height: 16px;
    white-space: nowrap;
    overflow: hidden;
}
.tree .count {
    padding-left: 2px;
    font-size: 13px;
}
.root svg, .root em {
    display: inline-block;
    margin-right: 4px;
    vertical-align: middle;
}
.tree .name {
    padding-left: 40px;
}
.selected .name {
    background: linear-gradient(#d6e6fd, #d6e6fd) no-repeat 39px 0;
    font-weight: bold;
}
.vscroll {
    width: 16px;
    padding: 17px 4px 3px;
    background: #f7f7f7;
}
.vscroll i {
    display: block;
    width: 8px;
    height: 58px;
    border-radius: 4px;
    background: #c1c1c1;
}
.split {
    display: flex;
    align-items: center;
    justify-content: center;
    height: 10px;
    background: #ededed;
}
.split.bottom {
    height: 31px;
    padding-top: 20px;
}
.split i, .vsplit i, .hsplit i {
    width: 4px;
    height: 3px;
    border: solid #666;
    border-width: 1px 0 0 1px;
    border-radius: 2px 2px 0 0;
}
.overview {
    flex: 1;
    width: 100%;
    height: 0;
    min-height: 200px;
}

/* network drawings */
.metro, .rail, .yui {
    background: #000;
}
.metro polyline {
    fill: none;
    stroke: #fff;
    stroke-width: 10;
    stroke-opacity: .6;
    stroke-linejoin: round;
}
.overview polyline {
    stroke-width: 11;
    stroke-opacity: .7;
}
.metro circle {
    fill: #fff;
}
.metro .caption {
    stroke: #ccc;
    stroke-opacity: .4;
    stroke-width: 5;
    stroke-dasharray: 7 3 5 2 9 3;
}
.resize {
    stroke: #999;
    stroke-width: 3;
    stroke-dasharray: 3 2;
}
.rail polyline {
    fill: none;
    stroke-width: 6;
    stroke-linejoin: round;
}
.rail .gray { stroke: #a5a5a5; }
.rail .green { stroke: #009a1f; }
.rail .bright { stroke: #00ee2b; stroke-width: 7; }
.rail .blue { stroke: #00008c; }
.rail .red { stroke: #b50000; }
.rail .bright-red { stroke: #f00000; stroke-width: 8; }
.rail .dots {
    stroke: #fff;
    stroke-width: 6;
    stroke-linecap: round;
}
.rail .dots.red, .rail .dots.bright-red {
    stroke: #ffdf20;
}
.yui .track {
    stroke: #000080;
    stroke-width: 54;
    stroke-linecap: round;
}
.yui circle {
    fill: #cac9df;
    stroke: #111;
    stroke-width: 3;
}
.yui text {
    fill: #fff;
    font-family: "Noto Sans CJK JP", sans-serif;
    font-size: 51px;
    font-weight: 300;
}
.yui .edge {
    fill: #c8c8d0;
    font-size: 39px;
}

/* tool panel */
.tool-frame {
    margin-top: -9px;
    padding: 18px 7px 8px;
    background: linear-gradient(#e4e4e4 16px, #ededed 16px);
}
fieldset {
    min-width: 0;
    margin: 0 0 2px;
    padding: 23px 19px 20px;
    border: 1px solid #a3a3a3;
}
fieldset:last-child {
    margin-bottom: 0;
}
legend {
    height: 18px;
    margin-left: -14px;
    padding: 0 1px;
    font-size: 13px;
    line-height: 20px;
}
.tools {
    display: flex;
    justify-content: space-between;
    max-width: 328px;
}
.tools button {
    width: 28px;
    height: 19px;
    outline: 1px solid #858585;
    outline-offset: -1px;
    background: linear-gradient(#e4e4e4, #fbfbfb);
}

.vsplit {
    display: flex;
    align-items: center;
    width: 4px;
}
.hsplit {
    display: flex;
    justify-content: center;
    height: 4px;
}

/* desktop with the network windows */
.desktop {
    position: relative;
    flex: 1;
    min-height: 524px;
    overflow: hidden;
    background: #4169aa;
}
.win {
    position: absolute;
    width: 424px;
    border-radius: 3px 3px 0 0;
    box-shadow: 0 3px 8px rgba(0, 0, 0, .6);
}
.win.active {
    box-shadow: 0 7px 14px rgba(0, 0, 0, .8);
}
.tokyo { left: 12px; top: 5px; }
.honshu { left: 460px; top: 5px; }
.okinawa { left: 460px; top: 267px; }
.win > svg {
    width: 100%;
}
.win-title {
    display: grid;
    grid-template-columns: 1fr auto 1fr;
    align-items: center;
    height: 22px;
    padding: 0 9px;
    border-bottom: 1px solid #a8a8a8;
    border-radius: 3px 3px 0 0;
    background: linear-gradient(#fdfdfd, #e6e6e6);
    color: #8a8a8a;
}
.win-title h3 {
    font-size: 13px;
    line-height: 20px;
}
.win-title .lights i {
    border-color: #b3b3b3;
    background: linear-gradient(#e2e2e2, #fafafa);
}
.active .win-title {
    border-bottom-color: #6b6b6b;
    background: linear-gradient(#e2e2e2, #b6b6b6);
    color: #111;
}
.active .win-title .lights i {
    border-color: #5b616c;
    background: radial-gradient(circle at 50% 75%, #e3e8f0, #8b929e);
}
.win-title .lights svg {
    width: 10px;
    height: 10px;
    stroke: #1c222c;
    stroke-width: 2;
}

/* table panel */
.table-frame {
    margin-top: 7px;
    padding: 5px 1px 12px 2px;
}
.table-tools {
    display: flex;
    align-items: center;
    height: 38px;
    padding: 0 166px 3px 1px;
    background: #ededed;
}
.table-tools button {
    display: flex;
    align-items: center;
    justify-content: center;
    flex: 0 0 38px;
    height: 24px;
}
.table-tools .fx {
    color: #8f8f8f;
    font: italic 20px/20px "Liberation Serif", serif;
}
.combo {
    position: relative;
    flex: 1;
    margin-left: 13px;
}
.combo select {
    display: block;
    width: 100%;
    height: 21px;
    padding: 0 7px;
    border: 1px solid #8f8f8f;
    border-radius: 4px;
    appearance: none;
    background: linear-gradient(#fff, #ececec 60%, #fafafa);
    color: #111;
    font-size: 13px;
    line-height: 19px;
}
.combo svg {
    position: absolute;
    top: 5px;
    right: 6px;
    pointer-events: none;
}
.grid {
    display: flex;
    flex-direction: column;
    justify-content: space-between;
    height: 175px;
    padding: 1px 1px 0;
    overflow: hidden;
    border: 1px solid #999;
    border-top-color: #555;
    background: #fff;
}
.grid table {
    width: 900px;
}
.grid th {
    height: 23px;
    padding: 0 4px 0 0;
    border-right: 1px solid #62808c;
    border-bottom: 1px solid #62808c;
    background: #b9e3f1;
    font-weight: normal;
    text-align: right;
}
.hscroll {
    height: 15px;
    padding: 3px 1px;
    border-top: 1px solid #e0e0e0;
    background: #f8f8f8;
}
.hscroll i {
    display: block;
    width: 55%;
    height: 8px;
    border-radius: 4px;
    background: #c1c1c1;
}
.tabs.below {
    margin-top: -5px;
}

/* status bar */
.status {
    display: flex;
    align-items: center;
    justify-content: space-between;
    height: 41px;
    padding: 0 7px 0 10px;
}
.tasks {
    display: grid;
    place-items: center;
    width: 20px;
    height: 20px;
    border: 1px solid #999;
}
.memory {
    display: flex;
    align-items: center;
    gap: 4px;
    height: 24px;
    padding: 0 5px 0 4px;
    border: 1px solid #777;
    border-radius: 5px;
    background: linear-gradient(#fff, #f0f0f0);
    box-shadow: 0 1px 1px #aaa;
    font-size: 10px;
}
.memory i {
    width: 12px;
    height: 12px;
    border: 1px solid #4c5f4c;
    border-radius: 50%;
    background: #2fc936;
}
</style>
